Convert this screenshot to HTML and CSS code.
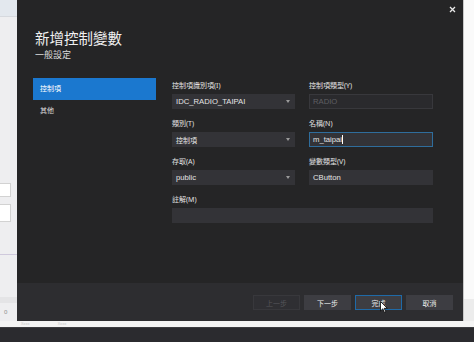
FILE: index.html
```html
<!DOCTYPE html>
<html lang="zh-Hant">

<head>
  <meta charset="UTF-8">
  <meta name="viewport" content="width=device-width, initial-scale=1.0">
  <title>新增控制變數</title>
  <link rel="stylesheet" href="styles.css">
</head>

<body>
  <div class="screen">
    <div class="side-left">
      <div class="sl-top"></div>
      <div class="sl-box sl-box-a"></div>
      <div class="sl-box sl-box-b"></div>
      <div class="sl-line"></div>
      <div class="sl-grey"></div>
      <div class="sl-num">0</div>
    </div>

    <div class="dialog">
      <div class="dlg-head">
        <div class="titles">
          <div class="title">新增控制變數</div>
          <div class="subtitle">一般設定</div>
        </div>
        <svg class="close" width="7" height="7" viewBox="0 0 7 7">
          <path d="M1 1 L6 6 M6 1 L1 6" stroke="#e8e8e8" stroke-width="1.3" fill="none" />
        </svg>
      </div>

      <div class="dlg-body">
        <ul class="nav">
          <li class="active">控制項</li>
          <li>其他</li>
        </ul>

        <div class="form">
          <div class="field">
            <label>控制項識別項(I)</label>
            <div class="box combo">
              <span>IDC_RADIO_TAIPAI</span>
              <svg width="4" height="3" viewBox="0 0 4 3"><path d="M0 0 H4 L2 3 Z" fill="#9a9a9a" /></svg>
            </div>
          </div>
          <div class="field">
            <label>控制項類型(Y)</label>
            <div class="box disabled"><span>RADIO</span></div>
          </div>

          <div class="field">
            <label>類別(T)</label>
            <div class="box combo">
              <span class="cjk">控制項</span>
              <svg width="4" height="3" viewBox="0 0 4 3"><path d="M0 0 H4 L2 3 Z" fill="#9a9a9a" /></svg>
            </div>
          </div>
          <div class="field">
            <label>名稱(N)</label>
            <div class="box focused"><span>m_taipai</span><i class="caret"></i></div>
          </div>

          <div class="field">
            <label>存取(A)</label>
            <div class="box combo">
              <span>public</span>
              <svg width="4" height="3" viewBox="0 0 4 3"><path d="M0 0 H4 L2 3 Z" fill="#9a9a9a" /></svg>
            </div>
          </div>
          <div class="field">
            <label>變數類型(V)</label>
            <div class="box"><span>CButton</span></div>
          </div>

          <div class="field wide">
            <label>註解(M)</label>
            <div class="box"></div>
          </div>
        </div>
      </div>

      <div class="dlg-foot">
        <button class="btn" disabled>上一步</button>
        <button class="btn">下一步</button>
        <button class="btn primary">完成
          <svg class="pointer" width="8" height="12" viewBox="0 0 8 12">
            <path d="M0.5 0.5 V10 L2.8 7.8 L4.4 11.4 L5.8 10.8 L4.2 7.3 H7.3 Z" fill="#fff" stroke="#000" stroke-width="0.8" />
          </svg>
        </button>
        <button class="btn">取消</button>
      </div>
    </div>

    <div class="side-right">
      <div class="sr-grey"></div>
    </div>
  </div>

  <div class="status-light">
    <span>Xxxx</span>
    <span>Xxxx</span>
  </div>
  <div class="taskbar"></div>
</body>

</html>
```

FILE: styles.css
```css
body {
  box-sizing: border-box;
  font-family: "Noto Sans", "Noto Sans CJK TC", sans-serif;
  margin: 0px;
  padding: 0px;
  width: 474px;
  height: 342px;
  overflow: hidden;
  background-color: #2b2b2f;
}

.screen {
  display: grid;
  grid-template-columns: 17px 446px 11px;
  height: 321px;
}

/* bits of the window behind the dialog */
.side-left {
  display: flex;
  flex-direction: column;
  background-color: #eeeef0;
}

.sl-top {
  height: 16px;
  background-color: #e3e8ee;
  border-bottom: solid 1px #d6d9de;
}

.sl-box {
  width: 10px;
  background-color: #ffffff;
  border: solid 1px #d2d2d2;
  border-left: none;
}

.sl-box-a {
  height: 12px;
  margin-top: 166px;
}

.sl-box-b {
  height: 16px;
  margin-top: 7px;
}

.sl-line {
  height: 1px;
  margin-top: 32px;
  background-color: #cfc9dc;
}

.sl-grey {
  height: 6px;
  margin-top: 42px;
  background-color: #e4e4e6;
}

.sl-num {
  margin-top: 5px;
  padding-left: 4px;
  font-size: 6px;
  color: #8a8a8a;
}

.side-right {
  display: flex;
  flex-direction: column;
  justify-content: flex-end;
  background-color: #fafafa;
  border-left: solid 1px #c8c8c8;
}

.sr-grey {
  height: 22px;
  background-color: #ececec;
}

/* dialog */
.dialog {
  display: flex;
  flex-direction: column;
  background-color: #252526;
  color: #e6e6e6;
}

.dlg-head {
  display: flex;
  justify-content: space-between;
  align-items: flex-start;
  height: 78px;
}

.titles {
  padding-top: 30px;
  padding-left: 18px;
}

.title {
  font-size: 14.5px;
  line-height: 17px;
  color: #f0f0f0;
}

.subtitle {
  margin-top: 2px;
  font-size: 9px;
  line-height: 11px;
  color: #dcdcdc;
}

.close {
  margin-top: 6px;
  margin-right: 7px;
}

.dlg-body {
  display: flex;
  gap: 16px;
  flex: 1;
  padding-left: 16px;
}

.nav {
  list-style: none;
  margin: 0px;
  padding: 0px;
  width: 123px;
}

.nav li {
  height: 22px;
  line-height: 22px;
  padding-left: 7px;
  font-size: 7px;
  color: #e0e0e0;
}

.nav li.active {
  background-color: #1b78cf;
  color: #ffffff;
}

.form {
  display: grid;
  grid-template-columns: 123px 124px;
  column-gap: 14px;
  row-gap: 10px;
  align-content: start;
  padding-top: 3px;
}

.field {
  display: flex;
  flex-direction: column;
}

.field.wide {
  grid-column: span 2;
}

.field label {
  height: 13px;
  line-height: 10px;
  font-size: 7px;
  color: #e2e2e2;
}

.box {
  display: flex;
  align-items: center;
  justify-content: space-between;
  box-sizing: border-box;
  height: 15px;
  padding: 0px 4px 0px 3px;
  background-color: #333337;
  border: solid 1px #333337;
  font-family: "Liberation Sans", "Noto Sans CJK TC", sans-serif;
  font-size: 7.7px;
  color: #e4e4e4;
}

.box .cjk {
  font-family: "Noto Sans", "Noto Sans CJK TC", sans-serif;
  font-size: 7px;
}

.box.disabled {
  background-color: #2a2a2d;
  border-color: #38383c;
  color: #5e5e62;
}

.box.focused {
  justify-content: flex-start;
  border-color: #2f6d9c;
}

.caret {
  width: 1px;
  height: 9px;
  background-color: #ffffff;
}

/* footer */
.dlg-foot {
  display: flex;
  justify-content: flex-end;
  gap: 4px;
  height: 38px;
  box-sizing: border-box;
  padding: 12px 10px 0px 0px;
  background-color: #2d2d30;
}

.btn {
  position: relative;
  width: 47px;
  height: 15px;
  padding: 0px;
  background-color: #3d3d42;
  border: solid 1px #3d3d42;
  color: #f0f0f0;
  font-family: "Noto Sans", "Noto Sans CJK TC", sans-serif;
  font-size: 7px;
}

.btn:disabled {
  background-color: #2f2f33;
  border-color: #38383c;
  color: #55555a;
}

.btn.primary {
  border-color: #1f6aa8;
}

.pointer {
  position: absolute;
  left: 24px;
  top: 5px;
}

/* bottom of the screen */
.status-light {
  display: flex;
  gap: 28px;
  height: 6px;
  padding-left: 21px;
  background-color: #f4f4f4;
  font-size: 4px;
  line-height: 6px;
  color: #c8c8c8;
}

.taskbar {
  height: 15px;
  border-top: solid 1px #3c3c40;
  background-color: #2b2b2f;
}
```
